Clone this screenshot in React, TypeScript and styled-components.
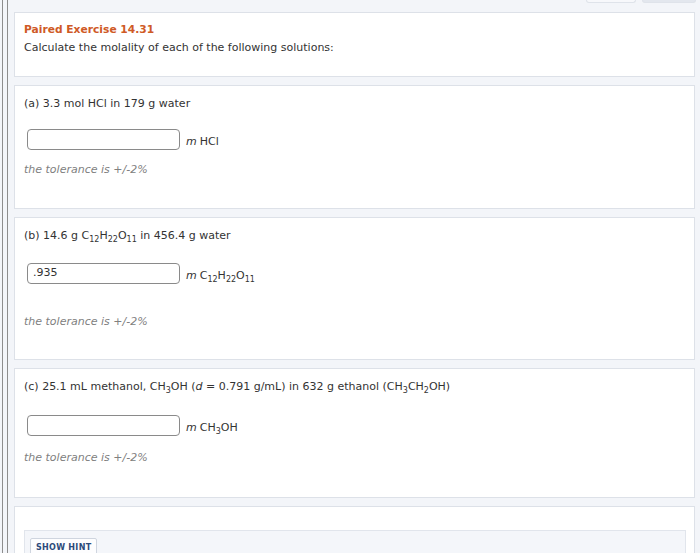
import React from "react";
import styled, { createGlobalStyle } from "styled-components";

const GlobalStyle = createGlobalStyle`
  html, body {
    margin: 0;
    padding: 0;
    background: #f3f5f9;
    font-family: "DejaVu Sans", Verdana, sans-serif;
    color: #333;
  }
`;

const Shell = styled.div`
  display: flex;
  min-height: 553px;
  overflow: hidden;
`;

const Rule = styled.div<{ $gap: number }>`
  width: 1px;
  background: #8d8d8d;
  margin-left: ${(p) => p.$gap}px;
  flex-shrink: 0;
`;

const Column = styled.div`
  flex: 1;
  display: flex;
  flex-direction: column;
  gap: 8px;
  padding: 12px 5px 0 6px;
  position: relative;
`;

const TopTabs = styled.div`
  position: absolute;
  top: 0;
  right: 4px;
  display: flex;
  gap: 6px;
`;

const Tab = styled.div<{ $w: number }>`
  width: ${(p) => p.$w}px;
  height: 2px;
  border: 1px solid #dfe3ea;
  border-top: none;
  border-radius: 0 0 3px 3px;
  background: ${(p) => (p.$w > 50 ? "#e3e7ee" : "#f7f8fb")};
`;

const Card = styled.div<{ $h: number; $pt?: number }>`
  background: #fff;
  border: 1px solid #dde1e8;
  box-sizing: border-box;
  height: ${(p) => p.$h}px;
  padding: ${(p) => p.$pt ?? 10}px 9px 0 9px;
  font-size: 11px;
  line-height: 16px;
  flex-shrink: 0;
`;

const Title = styled.div`
  color: #cf5a26;
  font-weight: bold;
  font-size: 10.7px;
  margin-bottom: 2px;
`;

const Prompt = styled.div``;

const AnswerRow = styled.div<{ $mt: number }>`
  display: flex;
  align-items: center;
  margin-top: ${(p) => p.$mt}px;
  padding-left: 3px;
`;

const Field = styled.div`
  width: 153px;
  height: 21px;
  box-sizing: border-box;
  border: 1px solid #8a8a8a;
  border-radius: 4px;
  background: #fff;
  padding: 1px 5px;
  font-size: 11px;
  line-height: 16px;
  color: #333;
`;

const Unit = styled.span`
  margin-left: 6px;
  font-size: 11px;
  padding-top: 4px;
  i {
    margin-right: 3px;
  }
`;

const Tolerance = styled.div<{ $mt: number }>`
  margin-top: ${(p) => p.$mt}px;
  color: #808080;
  font-style: italic;
`;

const HintWell = styled.div`
  margin-top: 13px;
  background: #f4f6fa;
  border: 1px solid #e1e5ec;
  margin-right: -1px;
  height: 40px;
  padding: 7px 5px;
  box-sizing: border-box;
`;

const HintButton = styled.button`
  font-family: "DejaVu Sans", Verdana, sans-serif;
  font-size: 8px;
  font-weight: bold;
  letter-spacing: 0.3px;
  color: #2c4a7a;
  background: #fdfdfe;
  border: 1px solid #cfd5df;
  border-radius: 2px;
  padding: 3px 5px;
  height: 19px;
`;

const Sub = styled.sub`
  font-size: 8px;
  vertical-align: -3px;
  line-height: 0;
`;

export default function App() {
  return (
    <>
      <GlobalStyle />
      <Shell>
        <Rule $gap={2} />
        <Rule $gap={4} />
        <Column>
          <TopTabs>
            <Tab $w={48} />
            <Tab $w={52} />
          </TopTabs>
          <Card $h={65} $pt={9}>
            <Title>Paired Exercise 14.31</Title>
            <Prompt>Calculate the molality of each of the following solutions:</Prompt>
          </Card>

          <Card $h={124}>
            <Prompt>(a) 3.3 mol HCl in 179 g water</Prompt>
            <AnswerRow $mt={17}>
              <Field />
              <Unit>
                <i>m</i>HCl
              </Unit>
            </AnswerRow>
            <Tolerance $mt={12}>the tolerance is +/-2%</Tolerance>
          </Card>

          <Card $h={143}>
            <Prompt>
              (b) 14.6 g C<Sub>12</Sub>H<Sub>22</Sub>O<Sub>11</Sub> in 456.4 g water
            </Prompt>
            <AnswerRow $mt={19}>
              <Field>.935</Field>
              <Unit>
                <i>m</i>C<Sub>12</Sub>H<Sub>22</Sub>O<Sub>11</Sub>
              </Unit>
            </AnswerRow>
            <Tolerance $mt={30}>the tolerance is +/-2%</Tolerance>
          </Card>

          <Card $h={130}>
            <Prompt>
              (c) 25.1 mL methanol, CH<Sub>3</Sub>OH (<i>d</i> = 0.791 g/mL) in 632 g ethanol
              (CH<Sub>3</Sub>CH<Sub>2</Sub>OH)
            </Prompt>
            <AnswerRow $mt={20}>
              <Field />
              <Unit>
                <i>m</i>CH<Sub>3</Sub>OH
              </Unit>
            </AnswerRow>
            <Tolerance $mt={14}>the tolerance is +/-2%</Tolerance>
          </Card>

          <Card $h={60} $pt={10}>
            <HintWell>
              <HintButton>SHOW HINT</HintButton>
            </HintWell>
          </Card>
        </Column>
      </Shell>
    </>
  );
}
